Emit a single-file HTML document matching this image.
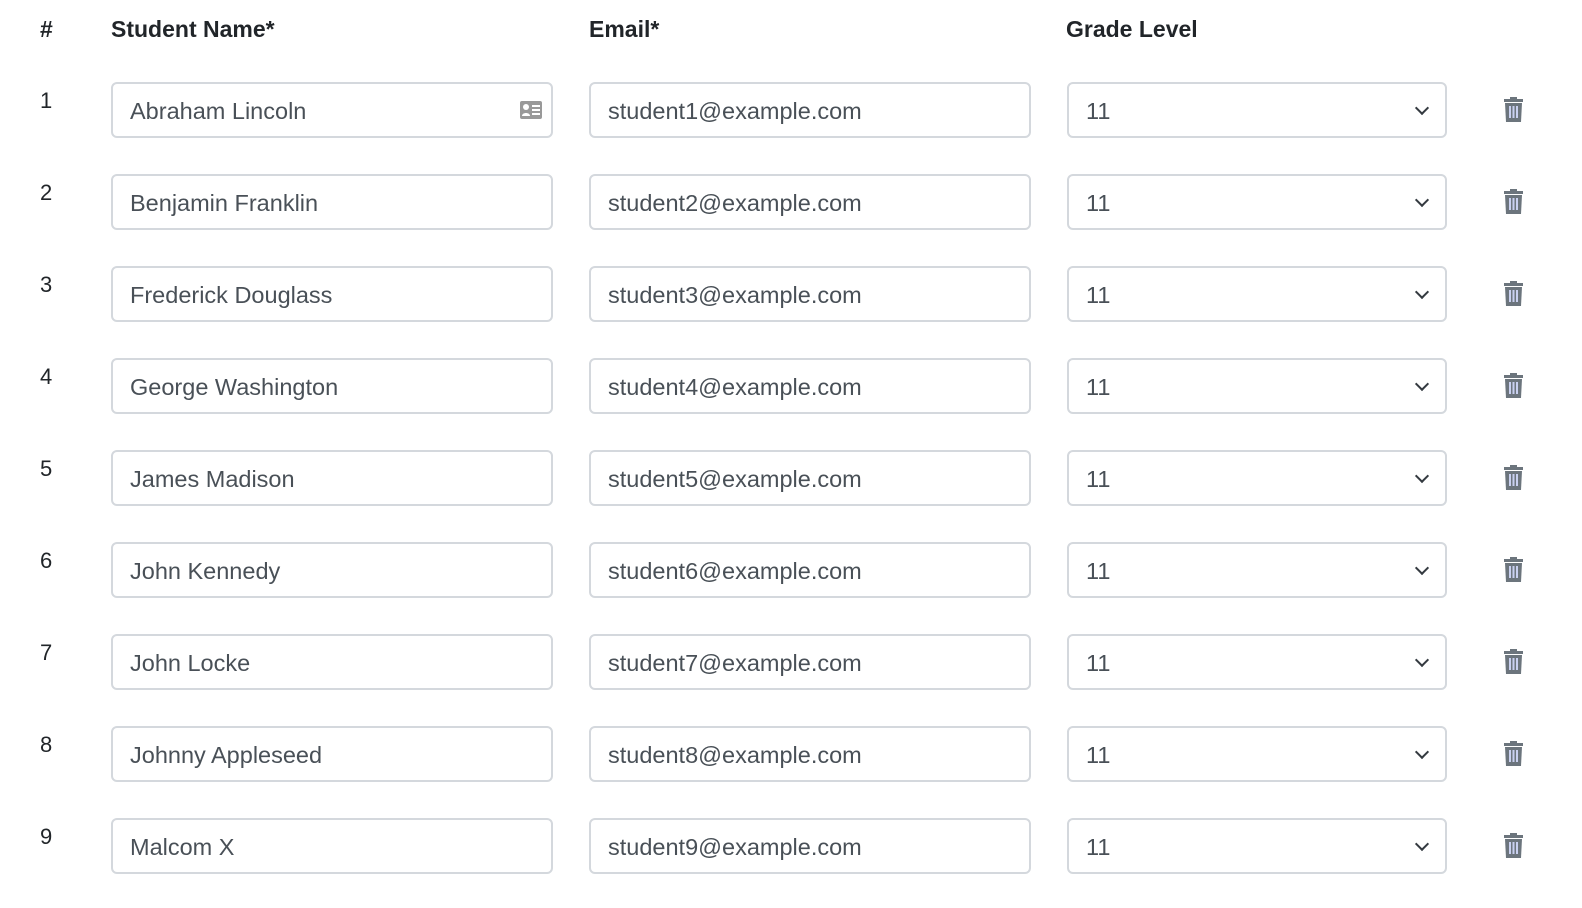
<!DOCTYPE html>
<html><head><style>
body{margin:0;width:1582px;height:908px;background:#fff;font-family:"Liberation Sans",sans-serif;position:relative;overflow:hidden}
.h{position:absolute;top:16px;font-weight:bold;font-size:23px;color:#212529}
.n{position:absolute;left:40px;font-size:22px;color:#212529}
.f{position:absolute;height:52px;border:2px solid #d4d8dd;border-radius:6px;box-sizing:content-box;font-size:23.5px;color:#495057;line-height:54px;padding-left:17px}
.sel::after{content:"";position:absolute;right:18px;top:19px;width:8px;height:8px;border-right:2px solid #343a40;border-bottom:2px solid #343a40;transform:rotate(45deg)}
.t{position:absolute;left:1503px}
</style></head><body>
<div class="h" style="left:40px">#</div>
<div class="h" style="left:111px">Student Name*</div>
<div class="h" style="left:589px">Email*</div>
<div class="h" style="left:1066px">Grade Level</div>
<div id="rows"></div>
<script>
var names=["Abraham Lincoln","Benjamin Franklin","Frederick Douglass","George Washington","James Madison","John Kennedy","John Locke","Johnny Appleseed","Malcom X"];
var h="";
for(var i=0;i<9;i++){var y=82+i*92;
h+='<div class="n" style="top:'+(y+6)+'px">'+(i+1)+'</div>';
h+='<div class="f" style="left:111px;top:'+y+'px;width:421px">'+names[i]+(i==0?'<svg style="position:absolute;right:8px;top:16px" width="24" height="20" viewBox="0 0 24 20"><rect x="1" y="1" width="22" height="18" rx="2" fill="#999"/><circle cx="7" cy="7" r="3" fill="#fff"/><path d="M3 16c0-4 8-4 8 0z" fill="#fff"/><rect x="13" y="5" width="8" height="2" fill="#fff"/><rect x="13" y="9" width="8" height="2" fill="#fff"/><rect x="13" y="13" width="8" height="2" fill="#fff"/></svg>':'')+'</div>';
h+='<div class="f" style="left:589px;top:'+y+'px;width:421px">student'+(i+1)+'@example.com</div>';
h+='<div class="f sel" style="left:1067px;top:'+y+'px;width:359px">11</div>';
h+='<svg class="t" style="top:'+(y+15)+'px" width="21" height="25" viewBox="0 0 21 25"><rect x="1" y="2" width="19" height="3" fill="#6c757d"/><rect x="7" y="0" width="7" height="3" fill="#6c757d"/><path d="M2 6h17l-1 19H3z" fill="#6c757d"/><rect x="6" y="9" width="2" height="12" fill="#c9d0f0"/><rect x="9.5" y="9" width="2" height="12" fill="#c9d0f0"/><rect x="13" y="9" width="2" height="12" fill="#c9d0f0"/></svg>';
}
document.getElementById("rows").innerHTML=h;
</script>
</body></html>
